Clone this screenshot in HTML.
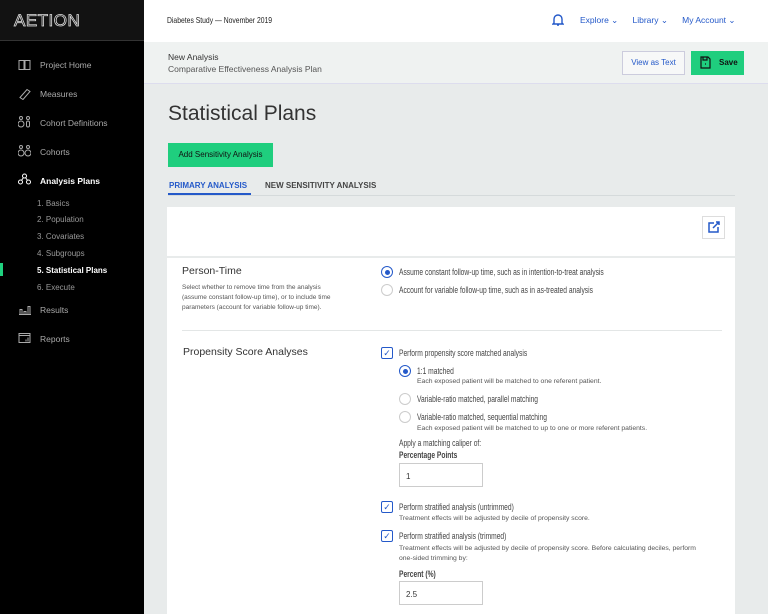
<!DOCTYPE html>
<html style="height:614px;overflow:hidden"><head><style>
*{margin:0;padding:0;box-sizing:border-box}
body{width:768px;height:614px;overflow:hidden;font-family:"Liberation Sans",sans-serif;background:#e8ebeb;position:relative;color:#333}
.a{position:absolute;white-space:nowrap}
#side{position:absolute;left:0;top:0;width:144px;height:614px;background:#000}
#logo{position:absolute;left:0;top:0;width:144px;height:41px;background:#121212;border-bottom:1px solid #333}
.nav{position:absolute;left:40px;font-size:8.5px;color:#aaa}
.sub{position:absolute;left:37px;font-size:8px;color:#999}
.ic{position:absolute;left:18px;width:13px;height:12px}
.radio{position:absolute;width:12px;height:12px;border-radius:50%;border:1px solid #ccc;background:#fff}
.radio.on{border-color:#2459c9}
.radio.on::after{content:"";position:absolute;left:2.5px;top:2.5px;width:5px;height:5px;border-radius:50%;background:#2459c9}
.cb{position:absolute;width:12px;height:12px;border:1px solid #2459c9;border-radius:2px;background:#fff;color:#2459c9;font-size:9px;line-height:10px;text-align:center}
.t{font-size:8.8px;color:#444;transform:scaleX(0.76);transform-origin:0 0;margin-top:-1px}
.s{font-size:6.8px;color:#555}
.inp{position:absolute;width:84px;height:24px;border:1px solid #ccc;background:#fff;font-size:8px;padding:8px 6px}
</style></head><body>
<div id="side">
<div id="logo"><div class="a" style="left:14px;top:11px;font-size:17px;color:#121212;-webkit-text-stroke:0.8px #ddd;letter-spacing:0.5px">AETION</div></div>
<svg class="ic" style="top:59px" viewBox="0 0 13 11"><path d="M1 1h5v9H1zM7 1h5v9H7z" fill="none" stroke="#aaa"/></svg>
<div class="nav" style="top:60px">Project Home</div>
<svg class="ic" style="top:88px" viewBox="0 0 13 11"><path d="M2 9L9 1l3 2-7 8z" fill="none" stroke="#aaa"/></svg>
<div class="nav" style="top:89px">Measures</div>
<svg class="ic" style="top:116px" viewBox="0 0 13 12"><circle cx="3" cy="2" r="1.5" fill="none" stroke="#aaa"/><circle cx="3" cy="8" r="3" fill="none" stroke="#aaa"/><circle cx="10" cy="2" r="1.5" fill="none" stroke="#aaa"/><rect x="8.5" y="5" width="3" height="6" rx="1.5" fill="none" stroke="#aaa"/></svg>
<div class="nav" style="top:118px">Cohort Definitions</div>
<svg class="ic" style="top:145px" viewBox="0 0 13 12"><circle cx="3" cy="2" r="1.5" fill="none" stroke="#aaa"/><circle cx="3" cy="8" r="3" fill="none" stroke="#aaa"/><circle cx="10" cy="2" r="1.5" fill="none" stroke="#aaa"/><circle cx="10" cy="8" r="3" fill="none" stroke="#aaa"/></svg>
<div class="nav" style="top:147px">Cohorts</div>
<svg class="ic" style="top:173px" viewBox="0 0 13 11"><circle cx="6.5" cy="2.5" r="2" fill="none" stroke="#fff"/><circle cx="2.5" cy="8.5" r="2" fill="none" stroke="#fff"/><circle cx="10.5" cy="8.5" r="2" fill="none" stroke="#fff"/><path d="M5.5 4L3.5 7M7.5 4l2 3" stroke="#fff"/></svg>
<div class="nav" style="top:176px;color:#fff;font-weight:bold">Analysis Plans</div>
<div class="sub" style="top:199px">1. Basics</div>
<div class="sub" style="top:215px">2. Population</div>
<div class="sub" style="top:232px">3. Covariates</div>
<div class="sub" style="top:249px">4. Subgroups</div>
<div class="a" style="left:0;top:263px;width:3px;height:13px;background:#1fd17f"></div>
<div class="sub" style="top:266px;color:#fff;font-weight:bold">5. Statistical Plans</div>
<div class="sub" style="top:283px">6. Execute</div>
<svg class="ic" style="top:304px" viewBox="0 0 13 11"><path d="M1 10h12M2 10V5h2v5M6 10V7h2v3M10 10V2h2v8" fill="none" stroke="#aaa"/></svg>
<div class="nav" style="top:305px">Results</div>
<svg class="ic" style="top:332px" viewBox="0 0 13 11"><path d="M1 1h11v9H1zM1 3h11M8 9V7M10 9V5" fill="none" stroke="#aaa"/></svg>
<div class="nav" style="top:334px">Reports</div>
</div>
<div class="a" style="left:144px;top:0;width:624px;height:42px;background:#fff"></div>
<div class="a" style="left:167px;top:15px;font-size:8.5px;color:#222;transform:scaleX(0.8);transform-origin:0 0">Diabetes Study — November 2019</div>
<svg class="a" style="left:552px;top:13px" width="12" height="13" viewBox="0 0 12 13"><path d="M2 10V6a4 4 0 018 0v4l1 1H1zM5 12h2" fill="none" stroke="#2459c9" stroke-width="1.4"/></svg>
<div class="a" style="left:580px;top:15px;font-size:8.5px;color:#2459c9">Explore ⌄&nbsp;&nbsp;&nbsp;&nbsp;&nbsp;&nbsp;Library ⌄&nbsp;&nbsp;&nbsp;&nbsp;&nbsp;&nbsp;My Account ⌄</div>
<div class="a" style="left:144px;top:42px;width:624px;height:42px;background:#eff2f1;border-bottom:1px solid #dde"></div>
<div class="a" style="left:168px;top:52px;font-size:8.5px;color:#333">New Analysis</div>
<div class="a" style="left:168px;top:64px;font-size:8.5px;color:#555">Comparative Effectiveness Analysis Plan</div>
<div class="a" style="left:622px;top:51px;width:63px;height:24px;border:1px solid #ccd;background:#f7f8f8;font-size:8px;color:#2459c9;text-align:center;line-height:22px">View as Text</div>
<div class="a" style="left:691px;top:51px;width:53px;height:24px;background:#1fce7e;font-size:8px;color:#111;font-weight:bold;line-height:24px;padding-left:28px">Save</div>
<svg class="a" style="left:700px;top:56px" width="11" height="13" viewBox="0 0 11 13"><path d="M1 1h7l2 2v9H1zM3 1v3h4V1M5 8h1" fill="none" stroke="#111" stroke-width="1.2"/></svg>
<div class="a" style="left:168px;top:102px;font-size:21px;color:#333">Statistical Plans</div>
<div class="a" style="left:168px;top:143px;width:105px;height:24px;background:#1fce7e;font-size:8px;color:#111;line-height:24px;text-align:center">Add Sensitivity Analysis</div>
<div class="a" style="left:169px;top:181px;font-size:8px;font-weight:bold;color:#2459c9">PRIMARY ANALYSIS</div>
<div class="a" style="left:168px;top:193px;width:83px;height:2px;background:#2459c9"></div>
<div class="a" style="left:265px;top:181px;font-size:8px;font-weight:bold;color:#444">NEW SENSITIVITY ANALYSIS</div>
<div class="a" style="left:168px;top:195px;width:567px;height:1px;background:#d5dadb"></div>
<div class="a" style="left:167px;top:207px;width:568px;height:407px;background:#fff"></div>
<div class="a" style="left:167px;top:256px;width:568px;height:2px;background:#e8ebeb"></div>
<div class="a" style="left:702px;top:216px;width:23px;height:23px;border:1px solid #ddd"></div>
<svg class="a" style="left:708px;top:221px" width="12" height="12" viewBox="0 0 12 12"><path d="M6 2H1v9h9V6M5 7l6-6M8 1h3v3" fill="none" stroke="#2459c9" stroke-width="1.5"/></svg>
<div class="a" style="left:182px;top:265px;font-size:10.5px;color:#333">Person-Time</div>
<div class="a s" style="left:182px;top:283px;line-height:10px;font-size:6.5px">Select whether to remove time from the analysis<br>(assume constant follow-up time), or to include time<br>parameters (account for variable follow-up time).</div>
<div class="radio on" style="left:381px;top:266px"></div>
<div class="a t" style="left:399px;top:268px">Assume constant follow-up time, such as in intention-to-treat analysis</div>
<div class="radio" style="left:381px;top:284px"></div>
<div class="a t" style="left:399px;top:286px">Account for variable follow-up time, such as in as-treated analysis</div>
<div class="a" style="left:182px;top:330px;width:540px;height:1px;background:#e3e6e6"></div>
<div class="a" style="left:183px;top:346px;font-size:10.5px;color:#333">Propensity Score Analyses</div>
<div class="cb" style="left:381px;top:347px">✓</div>
<div class="a t" style="left:399px;top:349px">Perform propensity score matched analysis</div>
<div class="radio on" style="left:399px;top:365px"></div>
<div class="a t" style="left:417px;top:367px">1:1 matched</div>
<div class="a s" style="left:417px;top:378px">Each exposed patient will be matched to one referent patient.</div>
<div class="radio" style="left:399px;top:393px"></div>
<div class="a t" style="left:417px;top:395px">Variable-ratio matched, parallel matching</div>
<div class="radio" style="left:399px;top:411px"></div>
<div class="a t" style="left:417px;top:413px">Variable-ratio matched, sequential matching</div>
<div class="a s" style="left:417px;top:425px">Each exposed patient will be matched to up to one or more referent patients.</div>
<div class="a t" style="left:399px;top:439px">Apply a matching caliper of:</div>
<div class="a t" style="left:399px;top:451px;font-weight:bold">Percentage Points</div>
<div class="inp" style="left:399px;top:463px">1</div>
<div class="cb" style="left:381px;top:501px">✓</div>
<div class="a t" style="left:399px;top:503px">Perform stratified analysis (untrimmed)</div>
<div class="a s" style="left:399px;top:515px">Treatment effects will be adjusted by decile of propensity score.</div>
<div class="cb" style="left:381px;top:530px">✓</div>
<div class="a t" style="left:399px;top:532px">Perform stratified analysis (trimmed)</div>
<div class="a s" style="left:399px;top:544px;line-height:10px">Treatment effects will be adjusted by decile of propensity score. Before calculating deciles, perform<br>one-sided trimming by:</div>
<div class="a t" style="left:399px;top:570px;font-weight:bold">Percent (%)</div>
<div class="inp" style="left:399px;top:581px">2.5</div>
</body></html>
